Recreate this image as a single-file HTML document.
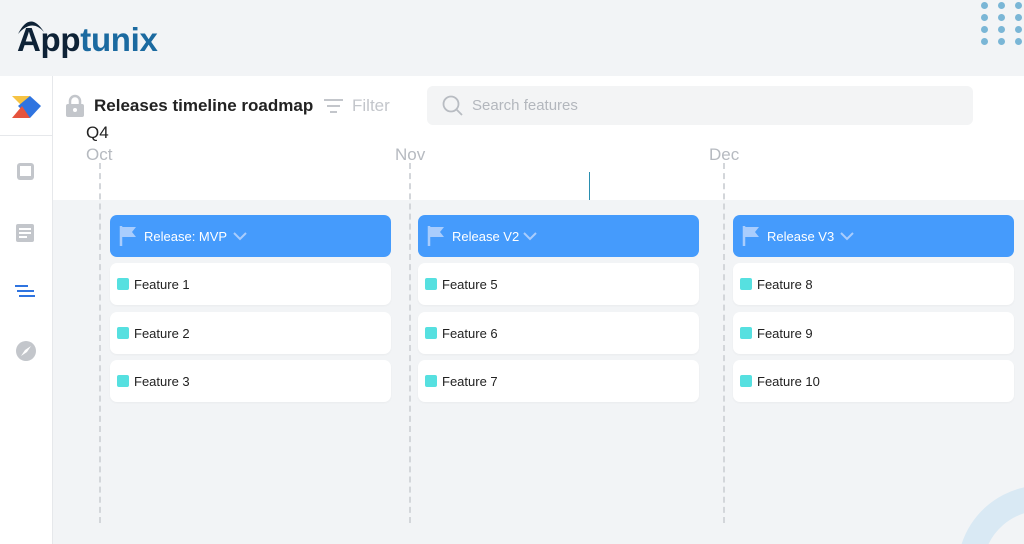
<!DOCTYPE html><html><head><meta charset="utf-8"><style>
*{margin:0;padding:0;box-sizing:border-box}
html{width:1024px;height:544px;overflow:hidden}
body{width:1024px;height:544px;overflow:hidden;background:#f2f4f6;font-family:"Liberation Sans",sans-serif;position:relative}
.abs{position:absolute}
.top{left:0;top:0;width:1024px;height:76px;background:#f2f4f6}
.side{left:0;top:76px;width:53px;height:468px;background:#fff;border-right:1px solid #e6e8eb}
.white{left:53px;top:76px;width:971px;height:124px;background:#fff}
.dot{width:7px;height:7px;border-radius:50%;background:#7ab6d6}
.vl{width:0;border-left:2px dashed #d3d6da;top:163px;height:360px}
.rel{height:42px;background:#459bfc;border-radius:7px;color:#fff;font-size:13px;display:flex;align-items:center;padding-left:8px}
.rel span{margin-left:6px}
.f{height:42px;background:#fff;border-radius:7px;font-size:13px;color:#222;display:flex;align-items:center;padding-left:7px;box-shadow:0 1px 2px rgba(0,0,0,.04)}
.f i{width:12px;height:12px;background:#56e0e0;border-radius:2px;margin-right:5px}
.m{font-size:17px;color:#b6bac0;top:145px}
</style></head><body>
<div class="abs top"></div>
<div class="abs" style="left:17px;top:21px;font-size:33px;font-weight:bold;letter-spacing:-0.3px;line-height:38px"><span style="color:#0e2236">App</span><span style="color:#1b6aa0">tunix</span></div>
<svg class="abs" style="left:16px;top:12px" width="40" height="24"><path d="M2 22 Q14 -2 28 20 Q16 6 2 22Z" fill="#0e2236"/></svg>
<div class="abs dot" style="left:981px;top:2px"></div><div class="abs dot" style="left:998px;top:2px"></div><div class="abs dot" style="left:1015px;top:2px"></div>
<div class="abs dot" style="left:981px;top:14px"></div><div class="abs dot" style="left:998px;top:14px"></div><div class="abs dot" style="left:1015px;top:14px"></div>
<div class="abs dot" style="left:981px;top:26px"></div><div class="abs dot" style="left:998px;top:26px"></div><div class="abs dot" style="left:1015px;top:26px"></div>
<div class="abs dot" style="left:981px;top:38px"></div><div class="abs dot" style="left:998px;top:38px"></div><div class="abs dot" style="left:1015px;top:38px"></div>
<div class="abs side"></div>
<div class="abs" style="left:0;top:135px;width:53px;border-top:1px solid #e6e8eb"></div>
<svg class="abs" style="left:10px;top:94px" width="32" height="26"><polygon points="2,2 20,2 12,12" fill="#f6c343"/><polygon points="20,2 31,12 20,24 8,12" fill="#2f74e0"/><polygon points="2,24 12,12 20,24" fill="#e5533d"/></svg>
<svg class="abs" style="left:16px;top:162px" width="20" height="20"><rect x="1" y="1" width="17" height="17" rx="3" fill="#c3c6cb"/><rect x="4" y="4" width="11" height="10" fill="#fff"/></svg>
<svg class="abs" style="left:16px;top:224px" width="20" height="20"><rect x="0" y="0" width="18" height="18" rx="2" fill="#c3c6cb"/><rect x="3" y="4" width="12" height="2" fill="#fff"/><rect x="3" y="8" width="12" height="2" fill="#fff"/><rect x="3" y="12" width="8" height="2" fill="#fff"/></svg>
<svg class="abs" style="left:15px;top:284px" width="22" height="16"><rect x="0" y="1" width="13" height="2" fill="#2f74e0"/><rect x="2" y="6" width="17" height="2" fill="#2f74e0"/><rect x="4" y="11" width="16" height="2" fill="#2f74e0"/></svg>
<svg class="abs" style="left:16px;top:341px" width="20" height="20"><circle cx="10" cy="10" r="10" fill="#c3c6cb"/><path d="M5 15 L9 9 L15 5 L11 11Z" fill="#fff"/></svg>
<div class="abs white"></div>
<div class="abs" style="left:427px;top:86px;width:546px;height:39px;background:#f3f4f5;border-radius:6px"></div>
<svg class="abs" style="left:442px;top:95px" width="22" height="22"><circle cx="9" cy="9" r="7.5" fill="none" stroke="#b8bcc2" stroke-width="1.8"/><path d="M14.5 14.5 L20 20" stroke="#b8bcc2" stroke-width="1.8"/></svg>
<div class="abs" style="left:472px;top:97px;font-size:15px;color:#b3b7bd">Search features</div>
<svg class="abs" style="left:65px;top:94px" width="20" height="24"><path d="M5 10 V7 a5 5 0 0 1 10 0 V10" fill="none" stroke="#c3c6cb" stroke-width="2.5"/><rect x="1" y="10" width="18" height="13" rx="2" fill="#c3c6cb"/><circle cx="10" cy="16" r="2" fill="#fff"/></svg>
<div class="abs" style="left:94px;top:96px;font-size:17px;font-weight:bold;color:#222">Releases timeline roadmap</div>
<svg class="abs" style="left:323px;top:97px" width="22" height="18"><rect x="1" y="2" width="19" height="2" fill="#c3c6cb"/><rect x="4" y="8" width="13" height="2" fill="#c3c6cb"/><rect x="7" y="14" width="7" height="2" fill="#c3c6cb"/></svg>
<div class="abs" style="left:352px;top:96px;font-size:17px;color:#c3c6cb">Filter</div>
<div class="abs" style="left:86px;top:123px;font-size:17px;color:#222">Q4</div>
<div class="abs m" style="left:86px">Oct</div>
<div class="abs m" style="left:395px">Nov</div>
<div class="abs m" style="left:709px">Dec</div>
<div class="abs" style="left:589px;top:172px;width:1px;height:28px;background:#2a8fb0"></div>
<div class="abs vl" style="left:99px"></div>
<div class="abs vl" style="left:409px"></div>
<div class="abs vl" style="left:723px"></div>
<svg class="abs" style="left:944px;top:474px" width="80" height="70"><path d="M17.6 70 A84.5 84.5 0 0 1 80 13.4 L80 39.3 A59.5 59.5 0 0 0 44.5 70 Z" fill="#d9e9f4"/></svg>

<div class="abs" style="left:110px;top:215px;width:281px">
<div class="rel"><svg width="20" height="22"><path d="M3 1 V21" stroke="#a9cdfd" stroke-width="2.5"/><path d="M4 2 H18 L14 7 L18 12 H4Z" fill="#a9cdfd"/></svg><span>Release: MVP</span><svg style="margin-left:6px" width="14" height="10"><path d="M1 2 L7 8 L13 2" fill="none" stroke="#a9cdfd" stroke-width="2"/></svg></div>
<div class="f" style="margin-top:6px"><i></i>Feature 1</div>
<div class="f" style="margin-top:7px"><i></i>Feature 2</div>
<div class="f" style="margin-top:6px"><i></i>Feature 3</div>
</div>
<div class="abs" style="left:418px;top:215px;width:281px">
<div class="rel"><svg width="20" height="22"><path d="M3 1 V21" stroke="#a9cdfd" stroke-width="2.5"/><path d="M4 2 H18 L14 7 L18 12 H4Z" fill="#a9cdfd"/></svg><span>Release V2</span><svg style="margin-left:4px" width="14" height="10"><path d="M1 2 L7 8 L13 2" fill="none" stroke="#a9cdfd" stroke-width="2"/></svg></div>
<div class="f" style="margin-top:6px"><i></i>Feature 5</div>
<div class="f" style="margin-top:7px"><i></i>Feature 6</div>
<div class="f" style="margin-top:6px"><i></i>Feature 7</div>
</div>
<div class="abs" style="left:733px;top:215px;width:281px">
<div class="rel"><svg width="20" height="22"><path d="M3 1 V21" stroke="#a9cdfd" stroke-width="2.5"/><path d="M4 2 H18 L14 7 L18 12 H4Z" fill="#a9cdfd"/></svg><span>Release V3</span><svg style="margin-left:6px" width="14" height="10"><path d="M1 2 L7 8 L13 2" fill="none" stroke="#a9cdfd" stroke-width="2"/></svg></div>
<div class="f" style="margin-top:6px"><i></i>Feature 8</div>
<div class="f" style="margin-top:7px"><i></i>Feature 9</div>
<div class="f" style="margin-top:6px"><i></i>Feature 10</div>
</div>
</body></html>
